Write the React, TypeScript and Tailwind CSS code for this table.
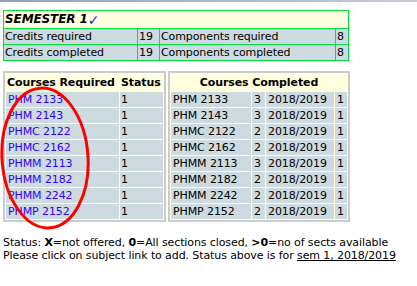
const required = [
  ["PHM 2133", "1"],
  ["PHM 2143", "1"],
  ["PHMC 2122", "1"],
  ["PHMC 2162", "1"],
  ["PHMM 2113", "1"],
  ["PHMM 2182", "1"],
  ["PHMM 2242", "1"],
  ["PHMP 2152", "1"],
];

const completed = [
  ["PHM 2133", "3", "2018/2019", "1"],
  ["PHM 2143", "3", "2018/2019", "1"],
  ["PHMC 2122", "2", "2018/2019", "1"],
  ["PHMC 2162", "2", "2018/2019", "1"],
  ["PHMM 2113", "3", "2018/2019", "1"],
  ["PHMM 2182", "2", "2018/2019", "1"],
  ["PHMM 2242", "2", "2018/2019", "1"],
  ["PHMP 2152", "2", "2018/2019", "1"],
];

export default function App() {
  return (
    <div className="relative w-[417px] h-[286px] bg-white text-[11px] leading-[13px] tracking-[-0.1px] text-black font-['DejaVu_Sans',Verdana,sans-serif]">
      <div className="h-[2px] bg-gradient-to-r from-[#9aa0b0] to-[#c8ccd8]" />

      {/* semester summary */}
      <table className="mt-[8px] ml-[3px] w-[346px] border-collapse border border-[#00e040]">
        <tbody>
          <tr className="h-[18px] bg-[#ffffdf]">
            <td colSpan={4} className="border border-[#00e040] px-[1px] font-bold italic text-[12px]">
              SEMESTER 1
              <span className="text-[#2a2ae0] font-normal text-[14px] leading-none align-top">✓</span>
            </td>
          </tr>
          <tr className="h-[16px] bg-[#cddbe0]">
            <td className="w-[134px] border border-[#00e040] px-[1px]">Credits required</td>
            <td className="w-[22px] border border-[#00e040] px-[1px]">19</td>
            <td className="border border-[#00e040] px-[1px]">Components required</td>
            <td className="w-[13px] border border-[#00e040] px-[1px]">8</td>
          </tr>
          <tr className="h-[16px] bg-[#cddbe0]">
            <td className="border border-[#00e040] px-[1px]">Credits completed</td>
            <td className="border border-[#00e040] px-[1px]">19</td>
            <td className="border border-[#00e040] px-[1px]">Components completed</td>
            <td className="border border-[#00e040] px-[1px]">8</td>
          </tr>
        </tbody>
      </table>

      {/* courses */}
      <div className="mt-[10px] ml-[3px] flex gap-[2px] items-start">
        <table className="w-[163px] border-separate border-spacing-[1px] bg-[#ffffdf] border-2 border-[#c8cccc]">
          <thead>
            <tr className="h-[17px]">
              <th className="text-left font-bold px-[1px]">Courses Required</th>
              <th className="text-left font-bold px-[1px]">Status</th>
            </tr>
          </thead>
          <tbody>
            {required.map(([code, status]) => (
              <tr key={code} className="h-[15px]">
                <td className="w-[113px] bg-[#cddbe0] px-[2px]">
                  <a href="#" className="text-[#3300ff]">{code}</a>
                </td>
                <td className="bg-[#cddbe0] px-[1px]">{status}</td>
              </tr>
            ))}
          </tbody>
        </table>

        <table className="w-[182px] border-separate border-spacing-[1px] bg-[#ffffdf] border-2 border-[#c8cccc]">
          <thead>
            <tr className="h-[17px]">
              <th colSpan={4} className="text-center font-bold">Courses Completed</th>
            </tr>
          </thead>
          <tbody>
            {completed.map(([code, cr, year, n]) => (
              <tr key={code} className="h-[15px]">
                <td className="w-[80px] bg-[#cddbe0] px-[2px]">{code}</td>
                <td className="w-[13px] bg-[#cddbe0] px-[2px]">{cr}</td>
                <td className="w-[68px] bg-[#cddbe0] px-[2px]">{year}</td>
                <td className="bg-[#cddbe0] px-[2px]">{n}</td>
              </tr>
            ))}
          </tbody>
        </table>
      </div>

      <div className="mt-[14px] ml-[3px]">
        <p>
          Status: <b>X</b>=not offered, <b>0</b>=All sections closed, <b>&gt;0</b>=no of sects available
        </p>
        <p>
          Please click on subject link to add. Status above is for{" "}
          <span className="underline">sem 1, 2018/2019</span>
        </p>
      </div>

      {/* hand-drawn annotation */}
      <svg className="absolute left-0 top-0 pointer-events-none" width="417" height="286">
        <ellipse cx="45" cy="158" rx="43" ry="70" fill="none" stroke="#ff0000" strokeWidth="3" transform="rotate(-4 45 158)" />
      </svg>
    </div>
  );
}
